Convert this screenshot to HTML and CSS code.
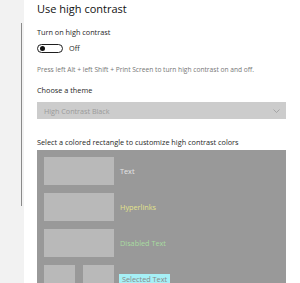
FILE: index.html
```html
<!DOCTYPE html>
<html>
<head>
<meta charset="utf-8">
<link rel="stylesheet" href="styles.css">
</head>
<body>
<div class="app">
  <aside class="sidebar"><div class="scroll"></div></aside>
  <main class="main">
    <h1 class="title">Use high contrast</h1>
    <div class="label first">Turn on high contrast</div>
    <div class="toggle-row">
      <span class="toggle"><span class="knob"></span></span>
      <span class="state">Off</span>
    </div>
    <div class="hint">Press left Alt + left Shift + Print Screen to turn high contrast on and off.</div>
    <div class="label choose">Choose a theme</div>
    <div class="dropdown">
      <span>High Contrast Black</span>
      <svg class="chev" width="7" height="4" viewBox="0 0 7 4"><path d="M0.5 0.5 L3.5 3.5 L6.5 0.5" fill="none" stroke="#9a9a9a" stroke-width="0.8"/></svg>
    </div>
    <div class="label select">Select a colored rectangle to customize high contrast colors</div>
    <div class="panel">
      <div class="row"><div class="swatch"></div><span class="name text">Text</span></div>
      <div class="row"><div class="swatch"></div><span class="name link">Hyperlinks</span></div>
      <div class="row"><div class="swatch"></div><span class="name disabled">Disabled Text</span></div>
      <div class="row"><div class="pair"><div class="swatch small"></div><div class="swatch small"></div></div><span class="name selected">Selected Text</span></div>
    </div>
  </main>
</div>
</body>
</html>
```
FILE: styles.css
```css
html, body { margin: 0; padding: 0; background: #fff; }
body { font-family: "Open Sans", "Noto Sans", sans-serif; color: #1a1a1a; overflow: hidden; height: 283px; }
.app { display: flex; height: 283px; }
.sidebar { width: 24px; flex: none; background: #f2f2f2; }
.scroll { margin: 23px 0 0 21px; width: 1px; height: 183px; background: #8a8a8a; }
.main { flex: 1; padding-left: 13px; width: 249px; }
.title { margin: 0; font-weight: 400; font-size: 11px; line-height: 18px; height: 18px; color: #111; }
.label { font-size: 7.3px; line-height: 12px; height: 12px; color: #1e1e1e; white-space: nowrap; }
.label.first { margin-top: 8px; }
.toggle-row { margin-top: 5px; height: 10px; display: flex; align-items: center; }
.toggle { width: 22px; height: 7px; border: 1.3px solid #1e1e1e; border-radius: 5px; display: flex; align-items: center; padding-left: 2px; box-sizing: content-box; }
.knob { width: 5px; height: 5px; border-radius: 50%; background: #111; }
.state { margin-left: 6px; font-size: 7.3px; color: #1e1e1e; }
.hint { margin-top: 11px; font-size: 6.65px; line-height: 12px; height: 12px; color: #777; white-space: nowrap; }
.label.choose { margin-top: 8px; }
.dropdown { margin-top: 6px; width: 249px; height: 17px; background: #cccccc; display: flex; align-items: center; justify-content: space-between; padding: 0 6px 0 7px; box-sizing: border-box; font-size: 7.2px; color: #9a9a9a; }
.label.select { margin-top: 17px; }
.panel { margin-top: 2px; width: 249px; height: 140px; background: #999999; padding: 7px; box-sizing: border-box; display: flex; flex-direction: column; gap: 8px; }
.row { display: flex; align-items: center; height: 28px; flex: none; }
.swatch { width: 70px; height: 28px; background: #b9b9b9; }
.pair { display: flex; gap: 8px; width: 70px; }
.swatch.small { width: 31px; }
.name { margin-left: 6px; font-size: 7.3px; line-height: 10px; }
.text { color: #e6e6e6; }
.link { color: #e2e28a; }
.disabled { color: #a8dca0; }
.selected { margin-left: 5px; background: #a6f0f6; color: #8a8a8a; padding: 0 3px; }
```
